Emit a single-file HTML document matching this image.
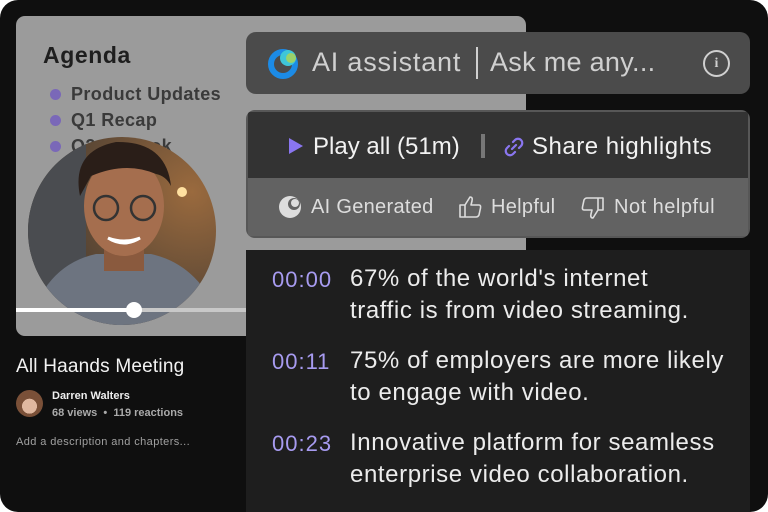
<!DOCTYPE html>
<html><head><meta charset="utf-8"><style>
*{margin:0;padding:0;box-sizing:border-box}
html,body{width:768px;height:512px;background:#fff;overflow:hidden;font-family:"Liberation Sans",sans-serif}
#frame{position:absolute;left:0;top:0;width:768px;height:512px;background:#0f0f0f;border-radius:18px;overflow:hidden}
.abs{position:absolute;white-space:nowrap}
#video{left:16px;top:16px;width:510px;height:320px;background:#9b9b9b;border-radius:9px;overflow:hidden}
.ag{left:27px;top:26px;font-size:23px;font-weight:bold;color:#1e1e1e;letter-spacing:0.6px}
.li{left:55px;font-size:18px;font-weight:bold;color:#3a3a3a;letter-spacing:0.4px}
.dot{left:34px;width:11px;height:11px;border-radius:50%;background:#7a68b8}
#right{left:246px;top:250px;width:504px;height:262px;background:#1e1e1e}
#ai{left:246px;top:32px;width:504px;height:62px;background:#4b4b4b;border-radius:10px}
#card{left:246px;top:110px;width:504px;height:128px;background:#575757;border-radius:9px;overflow:hidden}
.t{color:#a79bf0;font-size:22px;letter-spacing:1px}
.x{color:#ececec;font-size:24px;line-height:32px;letter-spacing:0.6px}
</style></head><body>
<div id="frame">
<div id="video" class="abs">
 <div class="abs ag">Agenda</div>
 <div class="abs dot" style="top:73px"></div><div class="abs li" style="top:68px">Product Updates</div>
 <div class="abs dot" style="top:99px"></div><div class="abs li" style="top:94px">Q1 Recap</div>
 <div class="abs dot" style="top:125px"></div><div class="abs li" style="top:120px">Q2 Outlook</div>
 <svg class="abs" style="left:0;top:0" width="510" height="320">
  <defs><clipPath id="c"><circle cx="106" cy="215" r="94"/></clipPath>
  <radialGradient id="bg" cx="0.8" cy="0.3" r="0.8"><stop offset="0" stop-color="#9a6a3e"/><stop offset="1" stop-color="#3a3530"/></radialGradient></defs>
  <g clip-path="url(#c)">
   <rect x="0" y="110" width="220" height="220" fill="url(#bg)"/>
   <rect x="10" y="110" width="60" height="220" fill="#4a4c50"/>
   <circle cx="166" cy="176" r="5" fill="#ffe0a0"/>
   <path d="M10 320 Q25 250 80 238 L135 238 Q190 250 210 320 Z" fill="#6d7480"/>
   <rect x="88" y="215" width="40" height="40" fill="#8a5a3e"/>
   <ellipse cx="108" cy="190" rx="40" ry="50" fill="#a56e4e"/>
   <path d="M64 180 Q55 135 100 126 Q150 125 155 170 Q150 160 140 158 Q110 145 75 160 Z" fill="#2a1e18"/>
   <circle cx="90" cy="192" r="12" fill="none" stroke="#333" stroke-width="2.5"/>
   <circle cx="127" cy="192" r="12" fill="none" stroke="#333" stroke-width="2.5"/>
   <path d="M92 222 Q108 232 124 222 Q108 228 92 222" fill="#fff" stroke="#fff" stroke-width="3"/>
  </g>
  <rect x="0" y="292" width="510" height="4" fill="#c8c8c8"/>
  <rect x="0" y="292" width="118" height="4" fill="#fff"/>
  <circle cx="118" cy="294" r="8" fill="#fff"/>
 </svg>
</div>
<div class="abs" style="left:16px;top:356px;font-size:19px;color:#f2f2f2;letter-spacing:0.2px">All Haands Meeting</div>
<div class="abs" style="left:16px;top:390px;width:27px;height:27px;border-radius:50%;background:radial-gradient(circle at 50% 60%,#e0b8a0 0 35%,#7a5038 36%)"></div>
<div class="abs" style="left:52px;top:390px;font-size:11px;font-weight:bold;color:#eee">Darren Walters</div>
<div class="abs" style="left:52px;top:407px;font-size:11px;font-weight:bold;color:#aaa">68 views &nbsp;•&nbsp; 119 reactions</div>
<div class="abs" style="left:16px;top:436px;font-size:11px;color:#a0a0a0;letter-spacing:0.4px">Add a description and chapters...</div>

<div id="right" class="abs">
 <div class="abs t" style="left:26px;top:17px">00:00</div>
 <div class="abs x" style="left:104px;top:13px">67% of the world's internet<br>traffic is from video streaming.</div>
 <div class="abs t" style="left:26px;top:99px">00:11</div>
 <div class="abs x" style="left:104px;top:95px">75% of employers are more likely<br>to engage with video.</div>
 <div class="abs t" style="left:26px;top:181px">00:23</div>
 <div class="abs x" style="left:104px;top:177px">Innovative platform for seamless<br>enterprise video collaboration.</div>
</div>

<div id="ai" class="abs">
 <svg class="abs" style="left:21px;top:14px" width="34" height="34" viewBox="0 0 34 34">
  <circle cx="16" cy="18" r="12" fill="none" stroke="#1c8be6" stroke-width="6"/>
  <circle cx="21" cy="12" r="8" fill="#3fc6d8"/><circle cx="24" cy="12" r="5" fill="#9ad26a"/>
 </svg>
 <div class="abs" style="left:66px;top:15px;font-size:27px;color:#d0d0d0;letter-spacing:0.8px">AI assistant</div>
 <div class="abs" style="left:230px;top:15px;width:2px;height:32px;background:#d0d0d0"></div>
 <div class="abs" style="left:244px;top:15px;font-size:27px;color:#d0d0d0;letter-spacing:0.3px">Ask me any...</div>
 <div class="abs" style="left:457px;top:18px;width:27px;height:27px;border:2px solid #d0d0d0;border-radius:50%;color:#d0d0d0;font-size:14px;font-weight:bold;text-align:center;line-height:23px;font-family:'Liberation Serif',serif">i</div>
</div>

<div id="card" class="abs">
 <div class="abs" style="left:2px;top:2px;width:500px;height:66px;background:#333"></div>
 <div class="abs" style="left:2px;top:68px;width:500px;height:58px;background:#626262"></div>
 <svg class="abs" style="left:43px;top:28px" width="14" height="16"><path d="M0 0 L14 8 L0 16Z" fill="#8a76f0"/></svg>
 <div class="abs" style="left:67px;top:23px;font-size:24px;color:#f2f2f2">Play all (51m)</div>
 <div class="abs" style="left:235px;top:24px;width:4px;height:24px;background:#777"></div>
 <svg class="abs" style="left:257px;top:26px" width="22" height="22" viewBox="0 0 22 22" fill="none" stroke="#8a76f0" stroke-width="2.2" stroke-linecap="round"><path d="M9 13 L13 9 M10 6 L12 4 A4 4 0 0 1 18 10 L16 12 M12 16 L10 18 A4 4 0 0 1 4 12 L6 10"/></svg>
 <div class="abs" style="left:286px;top:23px;font-size:24px;color:#f2f2f2;letter-spacing:0.5px">Share highlights</div>
 <svg class="abs" style="left:32px;top:85px" width="24" height="24" viewBox="0 0 24 24"><circle cx="12" cy="12" r="11" fill="#ddd"/><circle cx="16" cy="9" r="6" fill="#626262"/><circle cx="17" cy="8" r="4" fill="#ddd"/></svg>
 <div class="abs" style="left:65px;top:86px;font-size:20px;color:#ddd;letter-spacing:0.3px">AI Generated</div>
 <svg class="abs" style="left:212px;top:85px" width="25" height="24" viewBox="0 0 25 24" fill="none" stroke="#ddd" stroke-width="1.6" stroke-linejoin="round"><path d="M2 10 H7 V22 H2Z M7 10 L12 2 Q15 2 14 6 L13 10 H21 Q23 10 22.5 13 L21 20 Q20 22 18 22 H7"/></svg>
 <div class="abs" style="left:245px;top:86px;font-size:20px;color:#ddd;letter-spacing:0.3px">Helpful</div>
 <svg class="abs" style="left:334px;top:86px" width="25" height="24" viewBox="0 0 25 24" fill="none" stroke="#ddd" stroke-width="1.6" stroke-linejoin="round"><path d="M23 14 H18 V2 H23Z M18 14 L13 22 Q10 22 11 18 L12 14 H4 Q2 14 2.5 11 L4 4 Q5 2 7 2 H18"/></svg>
 <div class="abs" style="left:368px;top:86px;font-size:20px;color:#ddd;letter-spacing:0.5px">Not helpful</div>
</div>
</div>
</body></html>
